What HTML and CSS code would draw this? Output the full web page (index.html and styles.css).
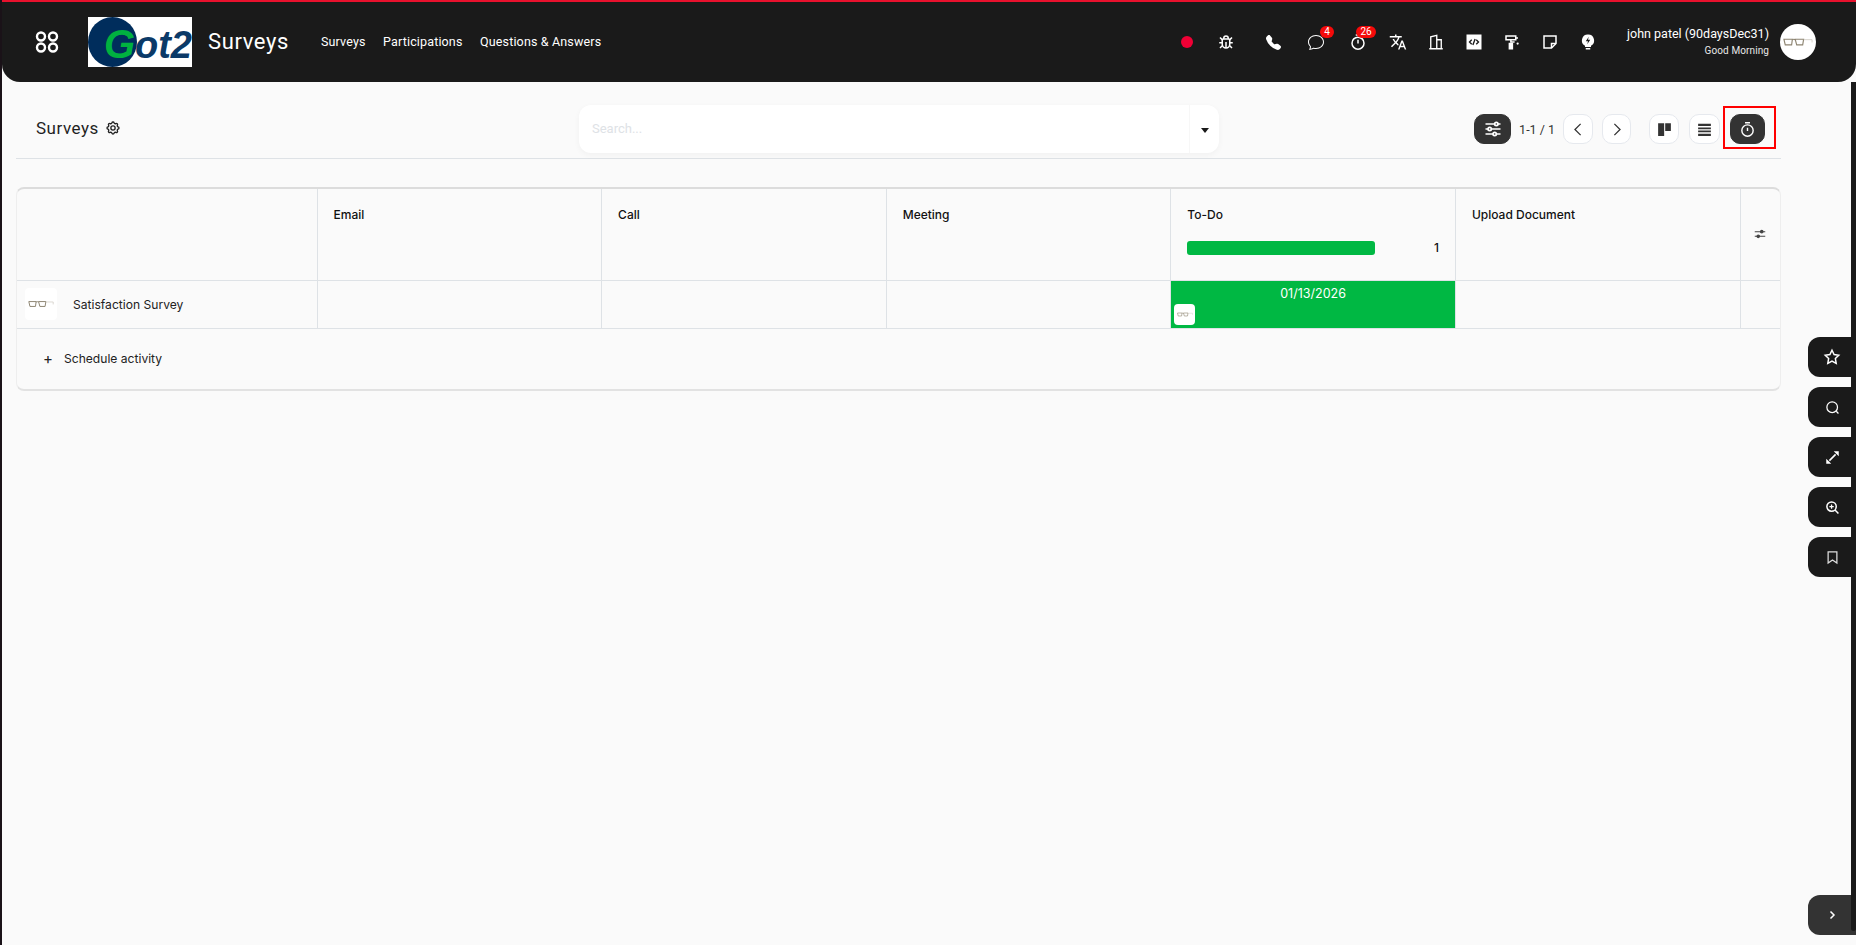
FILE: index.html
```html
<!DOCTYPE html>
<html lang="en">
<head>
<meta charset="utf-8">
<title>Surveys</title>
<link rel="stylesheet" href="styles.css">
</head>
<body>
<svg class="defs" width="0" height="0" aria-hidden="true">
  <defs>
    <g id="glasses" fill="none" stroke="#8d8471" stroke-width="1.2">
      <path d="M1 3h9l-.8 6H2.400z"/>
      <path d="M10 3.500c1-.5 2-.5 3 0"/>
      <path d="M13 3h9l-1 6h-6.400z"/>
      <path d="M22 3.500h9M31 3.500v3" stroke="#c9c5bb" stroke-width=".8"/>
    </g>
  </defs>
</svg>
<div class="app">
  <header class="topbar">
    <svg class="apps" viewBox="0 0 24 22"><g fill="none" stroke="#fff" stroke-width="2.400"><circle cx="6" cy="5.500" r="4"/><circle cx="18" cy="5.500" r="4"/><circle cx="6" cy="16.500" r="4"/><circle cx="18" cy="16.500" r="4"/></g></svg>
    <svg class="logo" viewBox="0 0 104 50">
      <rect width="104" height="50" fill="#fff"/>
      <ellipse cx="24.500" cy="25" rx="24.500" ry="25" fill="#002d5c"/>
      <text x="16" y="41" class="logo-g">G</text>
      <text x="47" y="41" class="logo-t">ot2</text>
    </svg>
    <span class="brand">Surveys</span>
    <nav class="mainnav">
      <a>Surveys</a>
      <a>Participations</a>
      <a>Questions &amp; Answers</a>
    </nav>
    <div class="hicons">
      <span class="rec"></span>
      <span class="hicon"><svg viewBox="0 0 24 24" fill="none" stroke="#fff" stroke-width="2"><path d="M8 8h8a3 3 0 0 1 1 2v5a5 5 0 0 1-10 0v-5a3 3 0 0 1 1-2z"/><path d="M9 8V7a3 3 0 0 1 6 0v1M12 12v8M7 13H3M21 13h-4M7 17l-3 3M17 17l3 3M7.500 9.500 4 6M16.500 9.500 20 6"/></svg></span>
      <span class="hicon phone-slot"><svg class="phone" viewBox="0 0 16 16" fill="#fff"><path d="M1.885.511a1.745 1.745 0 0 1 2.610.163L6.290 2.980c.329.423.445.974.315 1.494l-.547 2.190a.678.678 0 0 0 .178.643l2.457 2.457a.678.678 0 0 0 .644.178l2.189-.547a1.745 1.745 0 0 1 1.494.315l2.306 1.794c.829.645.905 1.870.163 2.611l-1.034 1.034c-.740.740-1.846 1.065-2.877.702a18.634 18.634 0 0 1-7.010-4.420 18.634 18.634 0 0 1-4.420-7.009c-.362-1.030-.037-2.137.703-2.877L1.885.511z"/></svg></span>
      <span class="hicon chat-slot"><svg class="chat" viewBox="0 0 16 16" fill="#fff"><path d="M2.678 11.894a1 1 0 0 1 .287.801 10.970 10.970 0 0 1-.398 2c1.395-.323 2.247-.697 2.634-.893a1 1 0 0 1 .710-.074A8.060 8.060 0 0 0 8 14c3.996 0 7-2.807 7-6 0-3.192-3.004-6-7-6S1 4.808 1 8c0 1.468.617 2.830 1.678 3.894zm-.493 3.905a21.682 21.682 0 0 1-.713.129c-.2.032-.352-.176-.273-.362a9.680 9.680 0 0 0 .244-.637l.003-.010c.248-.720.450-1.548.524-2.319C.743 11.370 0 9.760 0 8c0-3.866 3.582-7 8-7s8 3.134 8 7-3.582 7-8 7a9.060 9.060 0 0 1-2.347-.306c-.520.263-1.639.742-3.468 1.105z"/></svg><b class="badge badge-a">4</b></span>
      <span class="hicon timer-slot"><svg viewBox="0 0 24 24" fill="none" stroke="#fff" stroke-width="2"><circle cx="12" cy="13.500" r="8"/><path d="M12 9v5M9 2.500h6"/></svg><b class="badge badge-b">26</b></span>
      <span class="hicon lang-slot"><svg viewBox="0 0 24 24" fill="#fff"><path d="M12.870 15.070l-2.540-2.510.03-.03c1.740-1.940 2.980-4.170 3.710-6.530H17V4h-7V2H8v2H1v1.990h11.170C11.500 7.920 10.440 9.750 9 11.350 8.070 10.320 7.300 9.190 6.690 8h-2c.73 1.630 1.730 3.170 2.980 4.560l-5.090 5.020L4 19l5-5 3.110 3.110.76-2.040zM18.500 10h-2L12 22h2l1.120-3h4.750L21 22h2l-4.500-12zm-2.620 7l1.620-4.330L19.120 17h-3.240z"/></svg></span>
      <span class="hicon"><svg viewBox="0 0 24 24" fill="none" stroke="#fff" stroke-width="1.800"><path d="M3 21h18M5 21V5l8-2v18M13 9h6v12"/></svg></span>
      <span class="hicon"><svg viewBox="0 0 24 24"><rect x="2" y="2" width="20" height="20" fill="#fff"/><path d="M9 9l-3 3 3 3M15 9l3 3-3 3M13.500 8l-3 8" fill="none" stroke="#1a1a1a" stroke-width="1.800"/></svg></span>
      <span class="hicon"><svg viewBox="0 0 24 24" fill="none" stroke="#fff" stroke-width="2"><path d="M4 4h13v5H4zM17 6.500h3"/><path d="M10.500 9v3h5"/><rect x="8.500" y="14" width="4" height="7" fill="#fff"/><circle cx="19.500" cy="14" r="1.500" fill="#fff" stroke="none"/></svg></span>
      <span class="hicon"><svg viewBox="0 0 24 24" fill="none" stroke="#fff" stroke-width="2"><path d="M4 4h16v10l-6 6H4z"/><path d="M20 14h-6v6"/></svg></span>
      <span class="hicon"><svg viewBox="0 0 24 24"><path d="M12 2a8 8 0 0 0-4 15v1.500h8V17a8 8 0 0 0-4-15z" fill="#fff"/><path d="M13 5l-4 6h3l-1 4 4-6h-3z" fill="#1a1a1a"/><path d="M9 21h6" stroke="#fff" stroke-width="2"/></svg></span>
    </div>
    <div class="user">
      <div class="user-text">
        <span class="user-name">john patel (90daysDec31)</span>
        <span class="user-greet">Good Morning</span>
      </div>
      <span class="avatar"><svg viewBox="0 0 32 12" class="glasses"><use href="#glasses"/></svg></span>
    </div>
  </header>

  <main class="content">
    <section class="toolbar">
      <div class="title">
        <h1>Surveys</h1>
        <svg class="gear" viewBox="0 0 24 24" fill="none" stroke="#222" stroke-width="2"><path d="M10.325 4.317c.426-1.756 2.924-1.756 3.350 0a1.724 1.724 0 0 0 2.573 1.066c1.543-.94 3.310.826 2.370 2.370a1.724 1.724 0 0 0 1.065 2.572c1.756.426 1.756 2.924 0 3.350a1.724 1.724 0 0 0-1.066 2.573c.94 1.543-.826 3.310-2.370 2.370a1.724 1.724 0 0 0-2.572 1.065c-.426 1.756-2.924 1.756-3.350 0a1.724 1.724 0 0 0-2.573-1.066c-1.543.94-3.310-.826-2.370-2.370a1.724 1.724 0 0 0-1.065-2.572c-1.756-.426-1.756-2.924 0-3.350a1.724 1.724 0 0 0 1.066-2.573c-.94-1.543.826-3.310 2.370-2.370 1 .608 2.296.07 2.572-1.065z"/><circle cx="12" cy="12" r="3.200"/></svg>
      </div>
      <div class="search">
        <span class="search-ph">Search...</span>
        <span class="search-drop"><i class="caret"></i></span>
      </div>
      <div class="tools">
        <button class="btn btn-dark btn-filter"><svg viewBox="0 0 24 24" fill="none" stroke="#fff" stroke-width="2"><path d="M3 6h18M3 12h18M3 18h18"/><circle cx="16" cy="6" r="2" fill="#333"/><circle cx="8" cy="12" r="2" fill="#333"/><circle cx="14" cy="18" r="2" fill="#333"/></svg></button>
        <span class="pager">1-1 / 1</span>
        <button class="btn"><svg viewBox="0 0 24 24" fill="none" stroke="#333" stroke-width="1.800"><path d="M15 4l-8 8 8 8"/></svg></button>
        <button class="btn btn-next"><svg viewBox="0 0 24 24" fill="none" stroke="#333" stroke-width="1.800"><path d="M9 4l8 8-8 8"/></svg></button>
        <button class="btn btn-kanban"><svg viewBox="0 0 24 24" fill="#333"><path d="M3 3h8.500v18H3zM13 3h8v11h-8z"/></svg></button>
        <button class="btn btn-list"><svg viewBox="0 0 24 24" fill="#333"><path d="M3 4h18v3H3zM3 9h18v2.500H3zM3 13.500h18V16H3zM3 18h18v3H3z"/></svg></button>
        <div class="highlight">
          <button class="btn btn-dark btn-activity"><svg viewBox="0 0 24 24" fill="none" stroke="#fff" stroke-width="2"><circle cx="12" cy="13.500" r="8"/><path d="M12 9.500v4.500M8.500 2.500h7"/></svg></button>
        </div>
      </div>
    </section>

    <section class="card">
      <table class="grid">
        <colgroup>
          <col class="col-name">
          <col><col><col><col><col>
          <col class="col-opt">
        </colgroup>
        <thead>
          <tr>
            <th></th>
            <th>Email</th>
            <th>Call</th>
            <th>Meeting</th>
            <th>
              To-Do
              <div class="progress"><span class="bar"></span><span class="count">1</span></div>
            </th>
            <th>Upload Document</th>
            <th class="opt"><svg viewBox="0 0 24 24" fill="none" stroke="#444" stroke-width="1.800"><path d="M3 8h18M3 16h18"/><circle cx="15" cy="8" r="2.200" fill="#444"/><circle cx="9" cy="16" r="2.200" fill="#444"/></svg></th>
          </tr>
        </thead>
        <tbody>
          <tr>
            <td class="name-cell"><div class="name-wrap"><span class="thumb"><svg viewBox="0 0 32 12" class="glasses"><use href="#glasses"/></svg></span><span>Satisfaction Survey</span></div></td>
            <td></td><td></td><td></td>
            <td class="todo">
              <div class="todo-date">01/13/2026</div>
              <span class="mini"><svg viewBox="0 0 32 12" class="glasses"><use href="#glasses"/></svg></span>
            </td>
            <td></td><td></td>
          </tr>
        </tbody>
      </table>
      <div class="schedule"><span class="plus">+</span><span>Schedule activity</span></div>
    </section>
  </main>

  <aside class="side">
    <button class="side-btn"><svg class="ico-star" viewBox="0 0 24 24" fill="none" stroke="#fff" stroke-width="2"><path d="M12 3l2.800 5.800 6.200.9-4.500 4.400 1.100 6.300L12 17.400l-5.600 3 1.100-6.300L3 9.700l6.200-.9z"/></svg></button>
    <button class="side-btn"><svg viewBox="0 0 24 24" fill="none" stroke="#fff" stroke-width="2"><circle cx="11.500" cy="11.500" r="8.500"/><path d="M18 18l3.500 3.500"/></svg></button>
    <button class="side-btn"><svg viewBox="0 0 24 24" fill="none" stroke="#fff" stroke-width="2.600"><path d="M7 17L17 7"/><path d="M14 2h8v8zM10 22H2v-8z" fill="#fff" stroke="none"/></svg></button>
    <button class="side-btn"><svg viewBox="0 0 24 24" fill="none" stroke="#fff" stroke-width="2.400"><circle cx="10.500" cy="10.500" r="7.500"/><path d="M16 16l5.500 5.500"/><path d="M10.500 7v7M7 10.500h7" stroke-width="2"/></svg></button>
    <button class="side-btn"><svg viewBox="0 0 24 24" fill="none" stroke="#ddd" stroke-width="2"><path d="M5 3h14v18l-7-5-7 5z"/></svg></button>
  </aside>
  <button class="side-btn side-next"><svg viewBox="0 0 24 24" fill="none" stroke="#fff" stroke-width="3"><path d="M9 5l7 7-7 7"/></svg></button>
  <div class="scroll-thumb"></div>
</div>
</body>
</html>
```

FILE: styles.css
```css
* { box-sizing: border-box; }
html, body { margin: 0; height: 100%; }
body {
  background: #fafafa;
  color: #1f1f1f;
  font-family: Inter, "Liberation Sans", sans-serif;
  overflow: hidden;
}
.defs { position: absolute; }
.app {
  position: relative;
  height: 945px;
  border-left: 2px solid #1a1218;
  background: #fafafa;
}

/* top bar */
.topbar {
  height: 82px;
  border-top: 2px solid #e8112d;
  border-radius: 0 0 18px 18px;
  background: #1a1a1a;
  display: flex;
  align-items: center;
  color: #fff;
  font-family: Roboto, sans-serif;
}
.apps { width: 24px; height: 22px; margin-left: 33px; flex: none; }
.logo { width: 104px; height: 50px; margin-left: 29px; flex: none; }
.logo-g { font: italic bold 40px "Liberation Sans", sans-serif; fill: #00b140; }
.logo-t { font: italic bold 38px "Liberation Sans", sans-serif; fill: #0b3a68; }
.brand { font-size: 22px; margin: 0 0 2px 16px; width: 84px; letter-spacing: .6px; }
.mainnav { display: flex; gap: 17.500px; margin: 0 0 2px 29px; font-size: 12.500px; letter-spacing: .15px; }
.hicons { display: flex; align-items: center; margin-left: auto; }
.rec { width: 12px; height: 12px; border-radius: 50%; background: #f00035; margin-right: 14px; }
.hicon { position: relative; width: 38px; height: 24px; display: flex; justify-content: center; align-items: center; }
.hicon svg { width: 18px; height: 18px; }
.hicon .phone { width: 15px; height: 15px; }
.hicon .chat { width: 16px; height: 16px; }
.phone-slot { width: 46px; margin-left: 5px; }
.chat-slot { margin-left: 1px; }
.timer-slot { margin-left: 4px; }
.lang-slot { margin-left: 2px; }
.badge {
  position: absolute;
  top: -4px;
  height: 12px;
  border-radius: 6px;
  background: #f50a0a;
  color: #fff;
  font-size: 10px;
  font-weight: 400;
  line-height: 12px;
  text-align: center;
}
.badge-a { left: 23px; width: 14px; }
.badge-b { left: 17px; width: 20px; }
.user { display: flex; align-items: center; margin-left: 20px; margin-right: 40px; }
.user-text { display: flex; flex-direction: column; align-items: flex-end; }
.user-name { font-size: 12.500px; line-height: 17px; }
.user-greet { font-size: 10px; letter-spacing: .1px; line-height: 17px; color: #e8e8e8; }
.avatar {
  width: 36px; height: 36px; margin-left: 11px;
  border-radius: 50%;
  background: #fff;
  display: flex; align-items: center; justify-content: center;
}
.glasses { width: 30px; height: 12px; }

/* toolbar */
.content { padding: 0 75px 0 14px; }
.toolbar {
  display: grid;
  grid-template-columns: 563px 640px 1fr;
  align-items: center;
  padding: 23px 0 5px;
  border-bottom: 1px solid #dee2e6;
  height: 77px;
}
.title { display: flex; align-items: center; gap: 6px; padding: 0 0 2px 20px; }
h1 { margin: 0; font: 400 17px Roboto, sans-serif; letter-spacing: .5px; }
.gear { width: 16px; height: 16px; }
.search {
  height: 48px;
  background: #fff;
  border-radius: 12px;
  box-shadow: 0 2px 6px rgba(0,0,0,.04);
  display: flex;
  align-items: center;
  justify-content: space-between;
  padding-left: 13px;
  font-family: Roboto, sans-serif;
}
.search-ph { font-size: 13px; color: #dee2e6; padding-bottom: 2px; }
.search-drop {
  width: 30px; height: 100%;
  border-left: 1px solid #f7f7f7;
  display: flex; align-items: center; justify-content: center;
}
.caret { border: 4px solid transparent; border-top: 5px solid #1a1a1a; border-bottom: 0; margin-top: 2px; }
.tools { display: flex; align-items: center; justify-content: flex-end; padding-right: 5px; }
.btn {
  width: 30px; height: 30px; padding: 0;
  margin-right: 9px;
  background: #fff;
  border: 1px solid #e6e9ee;
  border-radius: 10px;
  display: flex; align-items: center; justify-content: center;
}
.btn svg { width: 17px; height: 17px; }
.btn-dark { background: #333; border-color: #333; }
.btn-filter { width: 37px; margin-right: 8px; }
.btn-filter svg { width: 20px; height: 20px; }
.btn-next { width: 29px; margin-right: 18px; }
.btn-kanban { margin-right: 10px; }
.btn-list { width: 31px; margin-right: 3px; }
.btn-activity { width: 35px; margin: 0; }
.pager { font: 12.500px Roboto, sans-serif; color: #333; margin-right: 8px; }
.highlight {
  border: 2px solid #f00;
  padding: 6px 9px 3px 5px;
  margin-bottom: 3px;
}

/* table card */
.card {
  margin-top: 28px;
  height: 204px;
  border-top: 2px solid #dcdcdc;
  border-bottom: 2px solid #e2e2e2;
  border-left: 1px solid #eee;
  border-right: 1px solid #eee;
  border-radius: 8px;
}
.grid { width: 100%; table-layout: fixed; border-collapse: collapse; font-size: 12px; }
.col-name { width: 300px; }
.col-opt { width: 40px; }
.grid th, .grid td { border: 1px solid #dee2e6; padding: 0; }
.grid thead tr { height: 91px; }
.grid tbody tr { height: 48px; }
.grid thead tr:first-child th { border-top: 0; }
.grid th {
  vertical-align: top;
  text-align: left;
  font-weight: 500;
  padding: 18px 16px 0;
  color: #111;
}
.grid th:first-child, .grid td:first-child { border-left: 0; }
.grid th:last-child, .grid td:last-child { border-right: 0; }
.grid th.opt { vertical-align: middle; padding: 0; text-align: center; }
.opt svg { width: 14px; height: 14px; display: block; margin: 0 auto; }
.progress { display: flex; align-items: center; justify-content: space-between; margin-top: 18px; }
.bar { width: 188px; height: 14px; border-radius: 3px; background: #00b843; }
.count { font-weight: 500; }
.name-wrap { display: flex; align-items: center; gap: 16px; padding-left: 8px; font-size: 12.100px; color: #222; }
.thumb {
  width: 32px; height: 32px;
  background: #fff;
  border-radius: 4px;
  display: flex; align-items: center; justify-content: center;
}
.thumb .glasses { width: 26px; height: 10px; }
.grid td.todo { background: #00b843; color: #fff; vertical-align: top; padding: 5px 3px 0; }
.todo-date { text-align: center; line-height: 15px; font-size: 12.500px; }
.mini {
  width: 21px; height: 21px; margin-top: 3px;
  background: #fff;
  border-radius: 4px;
  display: flex; align-items: center; justify-content: center;
}
.mini .glasses { width: 16px; height: 7px; }
.schedule { display: flex; align-items: center; height: 60px; padding-left: 26px; gap: 12px; font-size: 12.100px; color: #222; }
.plus { font-size: 15px; width: 9px; }

/* side dock */
.side {
  position: absolute;
  top: 337px;
  right: 0;
  display: flex;
  flex-direction: column;
  gap: 10px;
}
.side-btn {
  width: 48px; height: 40px; padding: 0;
  border: 0;
  border-radius: 12px 0 0 12px;
  background: #1a1a1a;
  display: flex; align-items: center; justify-content: center;
}
.side-btn svg { width: 15px; height: 15px; }
.side-btn .ico-star { width: 18px; height: 18px; }
.side-next { position: absolute; top: 895px; right: 0; background: #333; }
.side-next svg { width: 12px; height: 12px; }
.scroll-thumb {
  position: absolute;
  top: 82px;
  right: 0;
  width: 5px;
  height: 849px;
  background: #1a1a1a;
  border-radius: 0 0 3px 3px;
}
```
